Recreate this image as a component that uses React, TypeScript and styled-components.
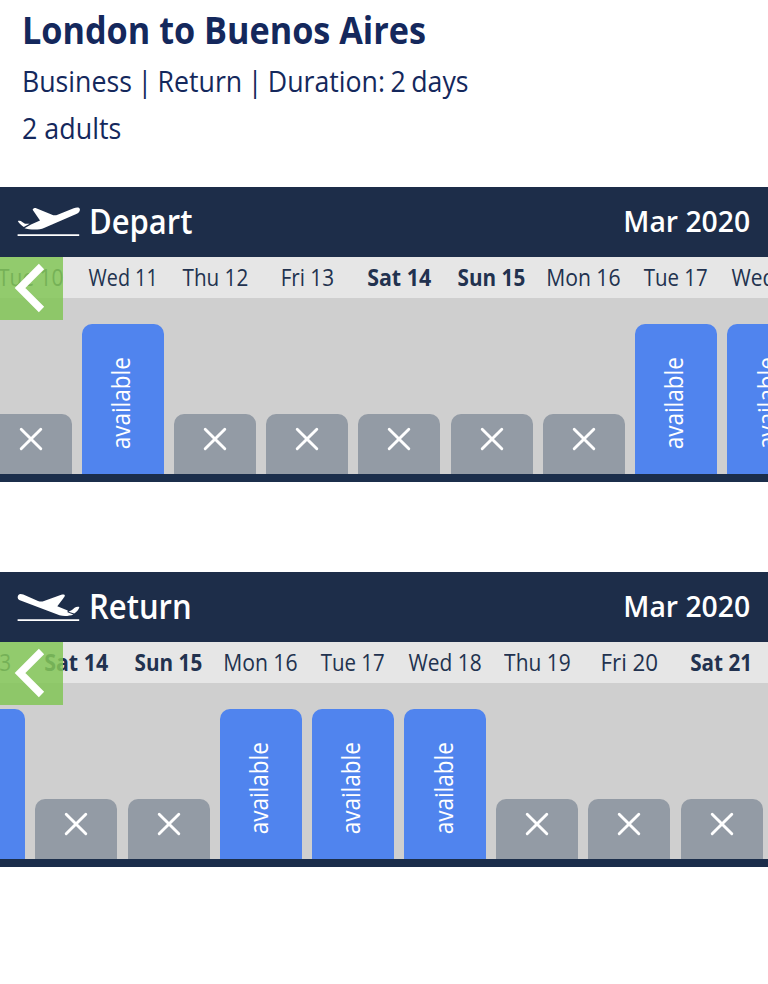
import React from "react";
import styled, { createGlobalStyle } from "styled-components";

const GlobalStyle = createGlobalStyle`
  * { box-sizing: border-box; }
  body {
    margin: 0;
    background: #fff;
    font-family: "Open Sans", "Noto Sans", sans-serif;
    overflow: hidden;
  }
`;

const Page = styled.main`
  width: 768px;
  height: 984px;
  overflow: hidden;
  display: flex;
  flex-direction: column;
`;

const Summary = styled.header`
  height: 187px;
  padding: 1px 0 0 22px;
  color: #14285c;
  white-space: nowrap;
`;

const Title = styled.h1`
  margin: 0;
  font-size: 38px;
  line-height: 56px;
  font-weight: 700;
  transform: scaleX(0.9);
  transform-origin: left;
`;

const Detail = styled.p<{ $squeeze: number }>`
  margin: 0;
  font-size: 29.5px;
  line-height: 47px;
  transform: scaleX(${(p) => p.$squeeze});
  transform-origin: left;
`;

const TripDetail = styled(Detail)`
  word-spacing: -1.6px;
`;

const Panel = styled.section`
  margin-bottom: 90px;
`;

const PanelHeader = styled.div`
  display: flex;
  align-items: center;
  height: 70px;
  padding: 0 18px 3px 17px;
  background: #1d2d49;
  color: #fff;
`;

const PlaneIcon = styled.svg`
  width: 63px;
  height: 32px;
  margin-right: 9px;
`;

const Heading = styled.h2`
  margin: 0;
  flex: 1;
  font-size: 33.5px;
  font-weight: 600;
  transform: scaleX(0.925);
  transform-origin: left;
`;

const Month = styled.span`
  font-size: 29.5px;
  font-weight: 600;
  transform: scaleX(0.96);
  transform-origin: right;
`;

const Calendar = styled.div`
  position: relative;
  overflow: hidden;
  height: 225px;
  background: linear-gradient(#e6e6e6 0 41px, #cfcfcf 41px);
  border-bottom: 8px solid #1b2e4b;
`;

const Days = styled.div<{ $shift: number }>`
  display: flex;
  width: max-content;
  height: 100%;
  margin-left: ${(p) => p.$shift}px;
`;

const Day = styled.div`
  display: flex;
  flex-direction: column;
  align-items: center;
  justify-content: space-between;
  width: 92.17px;
`;

const DayLabel = styled.div<{ $weekend: boolean; $squeeze: number }>`
  color: #22324f;
  font-size: 23.5px;
  line-height: 40px;
  white-space: nowrap;
  font-weight: ${(p) => (p.$weekend ? 700 : 400)};
  transform: scaleX(${(p) => p.$squeeze});
`;

const Slot = styled.div<{ $open: boolean }>`
  display: flex;
  justify-content: center;
  align-items: ${(p) => (p.$open ? "flex-end" : "flex-start")};
  width: 82px;
  height: ${(p) => (p.$open ? 150 : 60)}px;
  padding: ${(p) => (p.$open ? "0 5px 20px 0" : "13px 0 0")};
  border-radius: 10px 10px 0 0;
  background: ${(p) => (p.$open ? "#5084ee" : "#939ba5")};
`;

const SlotText = styled.span`
  writing-mode: vertical-rl;
  transform: rotate(180deg) scaleY(0.9);
  color: #fff;
  font-size: 25px;
  line-height: 40px;
`;

const CrossIcon = styled.svg`
  width: 24px;
  height: 24px;
`;

const PrevButton = styled.button`
  position: absolute;
  top: 0;
  left: 0;
  width: 63px;
  height: 63px;
  padding: 0;
  border: 0;
  background: rgba(132, 198, 88, 0.86);
`;

const Chevron = styled.svg`
  display: block;
  width: 63px;
  height: 63px;
`;

type DayInfo = [label: string, available: boolean];

const departDays: DayInfo[] = [
  ["Tue 10", false], ["Wed 11", true], ["Thu 12", false], ["Fri 13", false],
  ["Sat 14", false], ["Sun 15", false], ["Mon 16", false], ["Tue 17", true], ["Wed 18", true],
];

const returnDays: DayInfo[] = [
  ["Fri 13", true], ["Sat 14", false], ["Sun 15", false], ["Mon 16", true],
  ["Tue 17", true], ["Wed 18", true], ["Thu 19", false], ["Fri 20", false], ["Sat 21", false],
];

const labelSqueeze: Record<string, number> = {
  "Tue 10": 0.89, "Wed 11": 0.84, "Thu 12": 0.88, "Fri 13": 0.88, "Sat 14": 0.91,
  "Sun 15": 0.88, "Mon 16": 0.9, "Tue 17": 0.87, "Wed 18": 0.89, "Thu 19": 0.89,
  "Fri 20": 0.95, "Sat 21": 0.88,
};

const Departing = () => (
  <PlaneIcon viewBox="0 0 63 32" fill="#fff">
    <path d="M.8 16.1C2.3 15.3 4 15.8 5.2 16.9L8 18.7L12.6 18.8L6.8 21.9C4.5 20.5 2 18.5.8 16.1Z" />
    <path d="M7.5 23.2L14 19.6L23 15.6L15.8 4.9C15.3 3.7 17.8 2.7 19.2 3.2L34.5 9.4C36.6 10.5 38.6 10.5 40.6 9.7L56.7 3.2C59.7 2 62.2 2.1 62.8 3.9C63.3 5.8 61.8 8 59.3 9.1L27 23C22 25.3 12 24.6 7.5 23.2Z" />
    <path d="M.6 30.2H62.2" stroke="#fff" strokeWidth="1.7" />
  </PlaneIcon>
);

const Arriving = () => (
  <PlaneIcon viewBox="0 0 63 32" fill="#fff">
    <path d="M62.4 17C60.8 16.3 59 16.8 57.6 17.8L55 20L51.5 21.8L57.2 23.6C59.5 22 61.8 19.8 62.4 17Z" />
    <path d="M2.2 9.9C.3 8.7.3 6.3 1.4 4.9C2.5 3.6 4.6 3.9 6.3 4.6L21 10.9C23 11.7 25 11.7 27 11L44.3 4.7C46 4.1 48.2 4.4 47.8 5.8C47.6 6.8 46.8 7.6 46.2 8.5L40.3 16.2L50.7 20.5L50.5 22.3L56.4 24.4C52.5 26 47 26.4 42.5 25.2Z" />
    <path d="M.6 30.2H62.2" stroke="#fff" strokeWidth="1.7" />
  </PlaneIcon>
);

interface FlightPanelProps {
  title: string;
  icon: React.ReactNode;
  days: DayInfo[];
  shift: number;
}

const FlightPanel = ({ title, icon, days, shift }: FlightPanelProps) => (
  <Panel>
    <PanelHeader>
      {icon}
      <Heading>{title}</Heading>
      <Month>Mar 2020</Month>
    </PanelHeader>
    <Calendar>
      <Days $shift={shift}>
        {days.map(([label, open]) => (
          <Day key={label}>
            <DayLabel $weekend={label.startsWith("S")} $squeeze={labelSqueeze[label]}>
              {label}
            </DayLabel>
            <Slot $open={open}>
              {open ? (
                <SlotText>available</SlotText>
              ) : (
                <CrossIcon viewBox="0 0 24 24" stroke="#fff" strokeWidth="2.9" strokeLinecap="round">
                  <path d="M2.2 2.2L21.8 21.8M21.8 2.2L2.2 21.8" />
                </CrossIcon>
              )}
            </Slot>
          </Day>
        ))}
      </Days>
      <PrevButton aria-label="Previous days">
        <Chevron viewBox="0 0 63 63" fill="none" stroke="#fff" strokeWidth="7.5">
          <path d="M41.5 9.5L20 31L41.5 52.5" />
        </Chevron>
      </PrevButton>
    </Calendar>
  </Panel>
);

export default function App() {
  return (
    <Page>
      <GlobalStyle />
      <Summary>
        <Title>London to Buenos Aires</Title>
        <TripDetail $squeeze={0.905}>Business | Return | Duration: 2 days</TripDetail>
        <Detail $squeeze={0.91}>2 adults</Detail>
      </Summary>
      <FlightPanel title="Depart" icon={<Departing />} days={departDays} shift={-15.3} />
      <FlightPanel title="Return" icon={<Arriving />} days={returnDays} shift={-61.8} />
    </Page>
  );
}
